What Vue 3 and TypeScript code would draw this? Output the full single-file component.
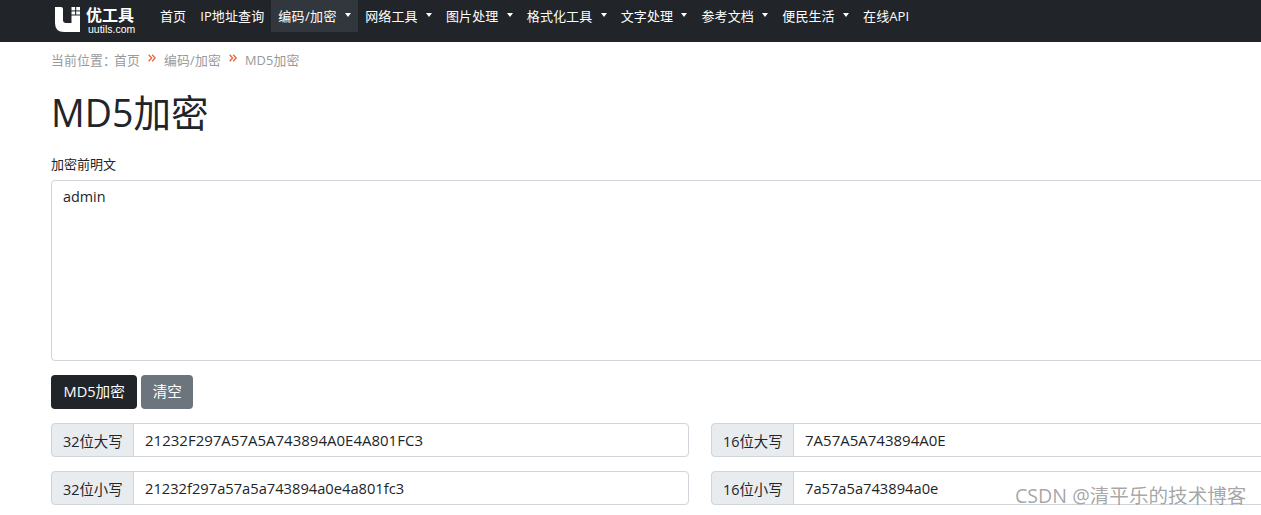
<script setup lang="ts">
interface NavItem { label: string; caret: boolean; active?: boolean }
const nav: NavItem[] = [
  { label: '首页', caret: false },
  { label: 'IP地址查询', caret: false },
  { label: '编码/加密', caret: true, active: true },
  { label: '网络工具', caret: true },
  { label: '图片处理', caret: true },
  { label: '格式化工具', caret: true },
  { label: '文字处理', caret: true },
  { label: '参考文档', caret: true },
  { label: '便民生活', caret: true },
  { label: '在线API', caret: false },
]
const results = [
  { label: '32位大写', value: '21232F297A57A5A743894A0E4A801FC3', lower: false },
  { label: '16位大写', value: '7A57A5A743894A0E', lower: false },
  { label: '32位小写', value: '21232f297a57a5a743894a0e4a801fc3', lower: true },
  { label: '16位小写', value: '7a57a5a743894a0e', lower: true },
]
</script>

<template>
  <div class="page">
    <header class="navbar">
      <a class="brand">
        <svg class="logo" width="26" height="25" viewBox="0 0 26 25">
          <path d="M0 0 H6 Q8 0 8 2 V13 Q8 16 11 16 H16.5 V8.5 H25 V25 H9 Q0 25 0 16 Z" fill="#fff" />
          <rect x="16.5" y="0" width="3.6" height="3.4" fill="#fff" />
          <rect x="21.2" y="0" width="3.8" height="3.4" fill="#fff" />
          <rect x="16.5" y="4.4" width="3.6" height="3.1" fill="#fff" />
          <rect x="21.2" y="4.4" width="3.8" height="3.1" fill="#fff" />
        </svg>
        <span class="brand-text">
          <span class="brand-name">优工具</span>
          <span class="brand-url">uutils.com</span>
        </span>
      </a>
      <nav class="nav">
        <a v-for="item in nav" :key="item.label" class="nav-link" :class="{ active: item.active }">
          {{ item.label }}<i v-if="item.caret" class="caret"></i>
        </a>
      </nav>
    </header>

    <main class="container">
      <div class="breadcrumb">
        <span class="crumb-lead">当前位置：</span>
        <span>首页</span>
        <svg class="sep" width="8" height="8" viewBox="0 0 8 8">
          <path d="M0.7 0.8 L3.6 4 L0.7 7.2 M4.2 0.8 L7.1 4 L4.2 7.2" fill="none" stroke="#e8653a" stroke-width="1.3" />
        </svg>
        <span>编码/加密</span>
        <svg class="sep" width="8" height="8" viewBox="0 0 8 8">
          <path d="M0.7 0.8 L3.6 4 L0.7 7.2 M4.2 0.8 L7.1 4 L4.2 7.2" fill="none" stroke="#e8653a" stroke-width="1.3" />
        </svg>
        <span>MD5加密</span>
      </div>
      <h1 class="title">MD5加密</h1>
      <label class="field-label" for="plain">加密前明文</label>
      <textarea id="plain" class="plain" readonly>admin</textarea>
      <div class="actions">
        <button class="btn btn-dark" type="button">MD5加密</button>
        <button class="btn btn-gray" type="button">清空</button>
      </div>
      <div class="results">
        <div v-for="r in results" :key="r.label" class="group">
          <span class="group-label">{{ r.label }}</span>
          <input class="group-input" :class="{ lower: r.lower }" type="text" readonly :value="r.value" />
        </div>
      </div>
    </main>

    <div class="watermark">CSDN @清平乐的技术博客</div>
  </div>
</template>

<style>
html, body { margin: 0; overflow: hidden; }
</style>

<style scoped>
.page {
  position: relative;
  width: 1261px;
  height: 515px;
  overflow: hidden;
  background: #fff;
  color: #212529;
  font-family: "Open Sans", "Noto Sans CJK SC", sans-serif;
  font-size: 14.4px;
}
.navbar {
  display: flex;
  align-items: flex-start;
  height: 42px;
  padding-left: 55px;
  background: #212529;
  box-sizing: border-box;
}
.brand {
  display: flex;
  width: 98px;
  padding-top: 7px;
  color: #fff;
}
.logo { flex: none; }
.brand-text {
  display: flex;
  flex-direction: column;
  align-items: flex-start;
  margin-left: 5px;
}
.brand-name {
  font-size: 16px;
  font-weight: 700;
  line-height: 16px;
}
.brand-url {
  margin-left: 2px;
  font-family: "Liberation Sans", sans-serif;
  font-size: 10.5px;
  line-height: 12px;
}
.nav { display: flex; }
.nav-link {
  display: flex;
  align-items: center;
  height: 32px;
  padding: 0 7px 2px;
  box-sizing: border-box;
  color: #fff;
  font-size: 13px;
  letter-spacing: 0.1px;
  white-space: nowrap;
}
.nav-link.active {
  background: #32373d;
  letter-spacing: 0.35px;
}
.caret {
  width: 0;
  height: 0;
  margin-left: 8.4px;
  border-top: 4px solid #fff;
  border-left: 3.5px solid transparent;
  border-right: 3.5px solid transparent;
}
.container {
  display: flex;
  flex-direction: column;
  align-items: flex-start;
  width: 1298px;
  margin-left: 51px;
}
.breadcrumb {
  display: flex;
  align-items: center;
  height: 18px;
  margin-top: 8px;
  font-size: 12.8px;
  letter-spacing: 0.2px;
  color: #999;
  white-space: nowrap;
}
.crumb-lead { width: 63px; }
.sep {
  flex: none;
  margin: -3px 8px 0;
}
.title {
  margin: 21px 0 0;
  font-size: 37.5px;
  font-weight: 400;
  line-height: 48px;
  white-space: nowrap;
}
.field-label {
  margin-top: 17px;
  font-size: 13px;
  line-height: 20px;
}
.plain {
  display: block;
  width: 1298px;
  height: 181px;
  margin-top: 6px;
  padding: 6px 11px;
  border: 1px solid #ced4da;
  border-radius: 4px;
  box-sizing: border-box;
  resize: none;
  outline: none;
  color: #212529;
  font: inherit;
  line-height: 19px;
}
.actions {
  display: flex;
  gap: 4px;
  margin-top: 14px;
}
.btn {
  height: 34px;
  padding: 0 11.5px 3px;
  border: 1px solid transparent;
  border-radius: 4px;
  color: #fff;
  font: inherit;
  font-size: 14.6px;
}
.btn-dark { background: #212529; }
.btn-gray { background: #6c757d; padding: 0 10.5px 3px; }
.results {
  display: grid;
  grid-template-columns: 638px 638px;
  column-gap: 22px;
  row-gap: 14px;
  margin-top: 14px;
}
.group { display: flex; height: 34px; }
.group-label {
  display: flex;
  align-items: center;
  width: 83px;
  padding-left: 11px;
  background: #e9ecef;
  border: 1px solid #ced4da;
  border-radius: 4px 0 0 4px;
  box-sizing: border-box;
  white-space: nowrap;
}
.group-input {
  flex: 1;
  min-width: 0;
  margin-left: -1px;
  padding: 0 11px;
  border: 1px solid #ced4da;
  border-radius: 0 4px 4px 0;
  box-sizing: border-box;
  outline: none;
  color: #212529;
  font: inherit;
  font-size: 15px;
}
.group-input.lower { font-size: 14.7px; }
.watermark {
  position: absolute;
  left: 1015px;
  top: 484px;
  color: rgba(90, 90, 90, 0.55);
  font-size: 19.6px;
  line-height: 24px;
  white-space: nowrap;
}
</style>
